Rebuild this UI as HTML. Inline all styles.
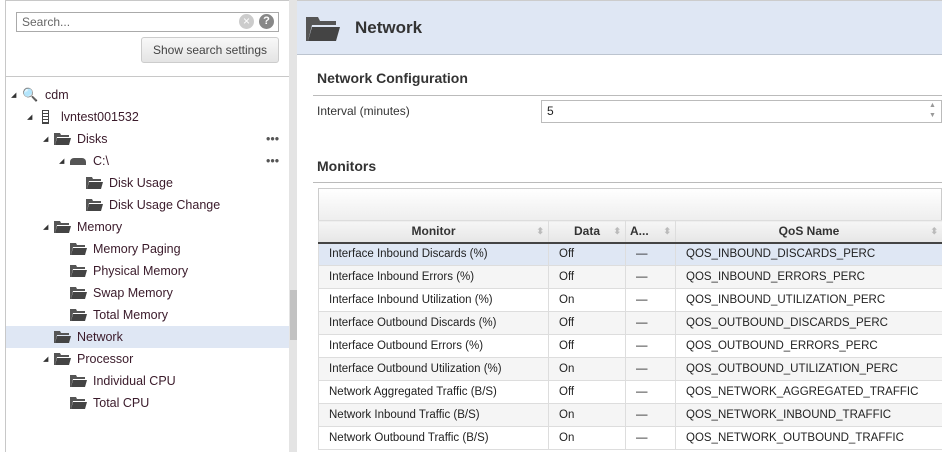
<!DOCTYPE html>
<html><head><meta charset="utf-8"><style>
*{box-sizing:border-box;margin:0;padding:0}
body{width:942px;height:452px;overflow:hidden;background:#fff;font-family:"Liberation Sans",sans-serif;font-size:12px;color:#222;position:relative}
.abs{position:absolute}
.left{left:5px;top:0;width:284px;height:452px;border-left:1px solid #c8c8c8;border-top:1px solid #c8c8c8}
.search{left:16px;top:12px;width:263px;height:20px;border:1px solid #aaa;background:#fff;color:#666;padding:2px 5px;font-size:12px}
.btn{left:141px;top:37px;width:138px;height:26px;border:1px solid #ccc;border-radius:3px;background:linear-gradient(#f8f8f8,#e4e4e4);color:#444;text-align:center;line-height:24px}
.sep{left:5px;top:76px;width:284px;height:1px;background:#c8c8c8}
.row{position:absolute;left:6px;width:283px;height:22px;line-height:22px;color:#3a1a2a;font-size:12.5px}
.sel{background:#dfe7f4}
.tri{position:absolute;top:1px;font-size:7px;color:#333}
.fold{position:absolute;top:5px;width:17px;height:12px}
.sb{left:289px;top:0;width:8px;height:452px;background:#e4e4e4}
.thumb{left:290px;top:290px;width:7px;height:50px;background:#c2c2c2}
.hdr{left:297px;top:0;width:645px;height:55px;background:#dfe7f4;border-bottom:1px solid #bcc4cf;border-top:1px solid #ccc}
table{border-collapse:collapse;position:absolute;left:318px;top:220px;width:624px;table-layout:fixed;font-size:11.5px}
td,th{height:23px;border:1px solid #ddd;padding:0 10px;white-space:nowrap;overflow:hidden;font-weight:normal;text-align:left}
th{background:linear-gradient(#f6f6f6,#e6e6e6);font-weight:bold;text-align:center;color:#333;border-bottom:2px solid #444;height:22px;position:relative;font-size:12px}
th span{position:absolute;right:4px;color:#bbb;font-size:9px;top:5px}
tr.g td{background:#f5f5f5}
tr.h td{background:#dfe7f4}
</style></head><body>
<div class="abs left"></div>
<div class="abs search">Search...</div>
<div class="abs" style="left:239px;top:14px;width:15px;height:15px;border-radius:50%;background:#ccc;color:#fff;text-align:center;line-height:15px;font-size:12px">×</div>
<div class="abs" style="left:259px;top:14px;width:15px;height:15px;border-radius:50%;background:#888;color:#fff;text-align:center;line-height:15px;font-size:11px;font-weight:bold">?</div>
<div class="abs btn">Show search settings</div>
<div class="abs sep"></div>
<svg width="0" height="0" style="position:absolute"><defs><symbol id="f" viewBox="0 0 17 12"><path d="M0 0h6l1 2h8v2H3L1 12H0z" fill="#555"/><path d="M3 5h14l-2 7H1z" fill="#444"/></symbol></defs></svg>
<div class="row" style="top:84px"><span class="tri" style="left:5px">◢</span><span class="abs" style="left:16px;top:0;font-size:13px">&#x1F50D;</span><span class="abs" style="left:39px">cdm</span></div>
<div class="row" style="top:106px"><span class="tri" style="left:21px">◢</span><span class="abs" style="left:36px;top:4px;width:7px;height:14px;border:1px solid #444;background:repeating-linear-gradient(#fff 0 2px,#444 2px 3px)"></span><span class="abs" style="left:55px">lvntest001532</span></div>
<div class="row" style="top:128px"><span class="tri" style="left:37px">◢</span><svg class="fold" style="left:48px"><use href="#f"/></svg><span class="abs" style="left:71px">Disks</span><span class="abs" style="left:260px;color:#555">•••</span></div>
<div class="row" style="top:150px"><span class="tri" style="left:53px">◢</span><span class="abs" style="left:64px;top:8px;width:16px;height:7px;background:#555;border-radius:4px 4px 0 0"></span><span class="abs" style="left:87px">C:\</span><span class="abs" style="left:260px;color:#555">•••</span></div>
<div class="row" style="top:172px"><svg class="fold" style="left:80px"><use href="#f"/></svg><span class="abs" style="left:103px">Disk Usage</span></div>
<div class="row" style="top:194px"><svg class="fold" style="left:80px"><use href="#f"/></svg><span class="abs" style="left:103px">Disk Usage Change</span></div>
<div class="row" style="top:216px"><span class="tri" style="left:37px">◢</span><svg class="fold" style="left:48px"><use href="#f"/></svg><span class="abs" style="left:71px">Memory</span></div>
<div class="row" style="top:238px"><svg class="fold" style="left:64px"><use href="#f"/></svg><span class="abs" style="left:87px">Memory Paging</span></div>
<div class="row" style="top:260px"><svg class="fold" style="left:64px"><use href="#f"/></svg><span class="abs" style="left:87px">Physical Memory</span></div>
<div class="row" style="top:282px"><svg class="fold" style="left:64px"><use href="#f"/></svg><span class="abs" style="left:87px">Swap Memory</span></div>
<div class="row" style="top:304px"><svg class="fold" style="left:64px"><use href="#f"/></svg><span class="abs" style="left:87px">Total Memory</span></div>
<div class="row sel" style="top:326px"><svg class="fold" style="left:48px"><use href="#f"/></svg><span class="abs" style="left:71px">Network</span></div>
<div class="row" style="top:348px"><span class="tri" style="left:37px">◢</span><svg class="fold" style="left:48px"><use href="#f"/></svg><span class="abs" style="left:71px">Processor</span></div>
<div class="row" style="top:370px"><svg class="fold" style="left:64px"><use href="#f"/></svg><span class="abs" style="left:87px">Individual CPU</span></div>
<div class="row" style="top:392px"><svg class="fold" style="left:64px"><use href="#f"/></svg><span class="abs" style="left:87px">Total CPU</span></div>
<div class="abs sb"></div><div class="abs thumb"></div>
<div class="abs hdr"></div>
<svg class="abs" style="left:306px;top:16px" width="34" height="26" viewBox="0 0 17 12"><use href="#f"/></svg>
<div class="abs" style="left:355px;top:18px;font-size:17px;font-weight:bold;color:#333">Network</div>
<div class="abs" style="left:317px;top:70px;font-size:14px;font-weight:bold;color:#333">Network Configuration</div>
<div class="abs" style="left:313px;top:95px;width:629px;height:1px;background:#bbb"></div>
<div class="abs" style="left:317px;top:104px;color:#333">Interval (minutes)</div>
<div class="abs" style="left:541px;top:100px;width:401px;height:23px;border:1px solid #bbb;padding:3px 5px">5</div>
<div class="abs" style="left:929px;top:101px;font-size:7px;color:#999;line-height:10px">▲<br>▼</div>
<div class="abs" style="left:317px;top:158px;font-size:14px;font-weight:bold;color:#333">Monitors</div>
<div class="abs" style="left:313px;top:182px;width:629px;height:1px;background:#bbb"></div>
<div class="abs" style="left:318px;top:188px;width:624px;height:33px;border:1px solid #ccc;background:linear-gradient(#fff,#eee)"></div>
<table>
<colgroup><col style="width:230px"><col style="width:77px"><col style="width:50px"><col style="width:267px"></colgroup>
<tr><th>Monitor<span>⬍</span></th><th>Data<span>⬍</span></th><th style="padding:0 4px;text-align:left">A...<span>⬍</span></th><th>QoS Name<span>⬍</span></th></tr>
<tr class="h"><td>Interface Inbound Discards (%)</td><td>Off</td><td>—</td><td>QOS_INBOUND_DISCARDS_PERC</td></tr>
<tr class="g"><td>Interface Inbound Errors (%)</td><td>Off</td><td>—</td><td>QOS_INBOUND_ERRORS_PERC</td></tr>
<tr><td>Interface Inbound Utilization (%)</td><td>On</td><td>—</td><td>QOS_INBOUND_UTILIZATION_PERC</td></tr>
<tr class="g"><td>Interface Outbound Discards (%)</td><td>Off</td><td>—</td><td>QOS_OUTBOUND_DISCARDS_PERC</td></tr>
<tr><td>Interface Outbound Errors (%)</td><td>Off</td><td>—</td><td>QOS_OUTBOUND_ERRORS_PERC</td></tr>
<tr class="g"><td>Interface Outbound Utilization (%)</td><td>On</td><td>—</td><td>QOS_OUTBOUND_UTILIZATION_PERC</td></tr>
<tr><td>Network Aggregated Traffic (B/S)</td><td>Off</td><td>—</td><td>QOS_NETWORK_AGGREGATED_TRAFFIC</td></tr>
<tr class="g"><td>Network Inbound Traffic (B/S)</td><td>On</td><td>—</td><td>QOS_NETWORK_INBOUND_TRAFFIC</td></tr>
<tr><td>Network Outbound Traffic (B/S)</td><td>On</td><td>—</td><td>QOS_NETWORK_OUTBOUND_TRAFFIC</td></tr>
</table>
</body></html>
